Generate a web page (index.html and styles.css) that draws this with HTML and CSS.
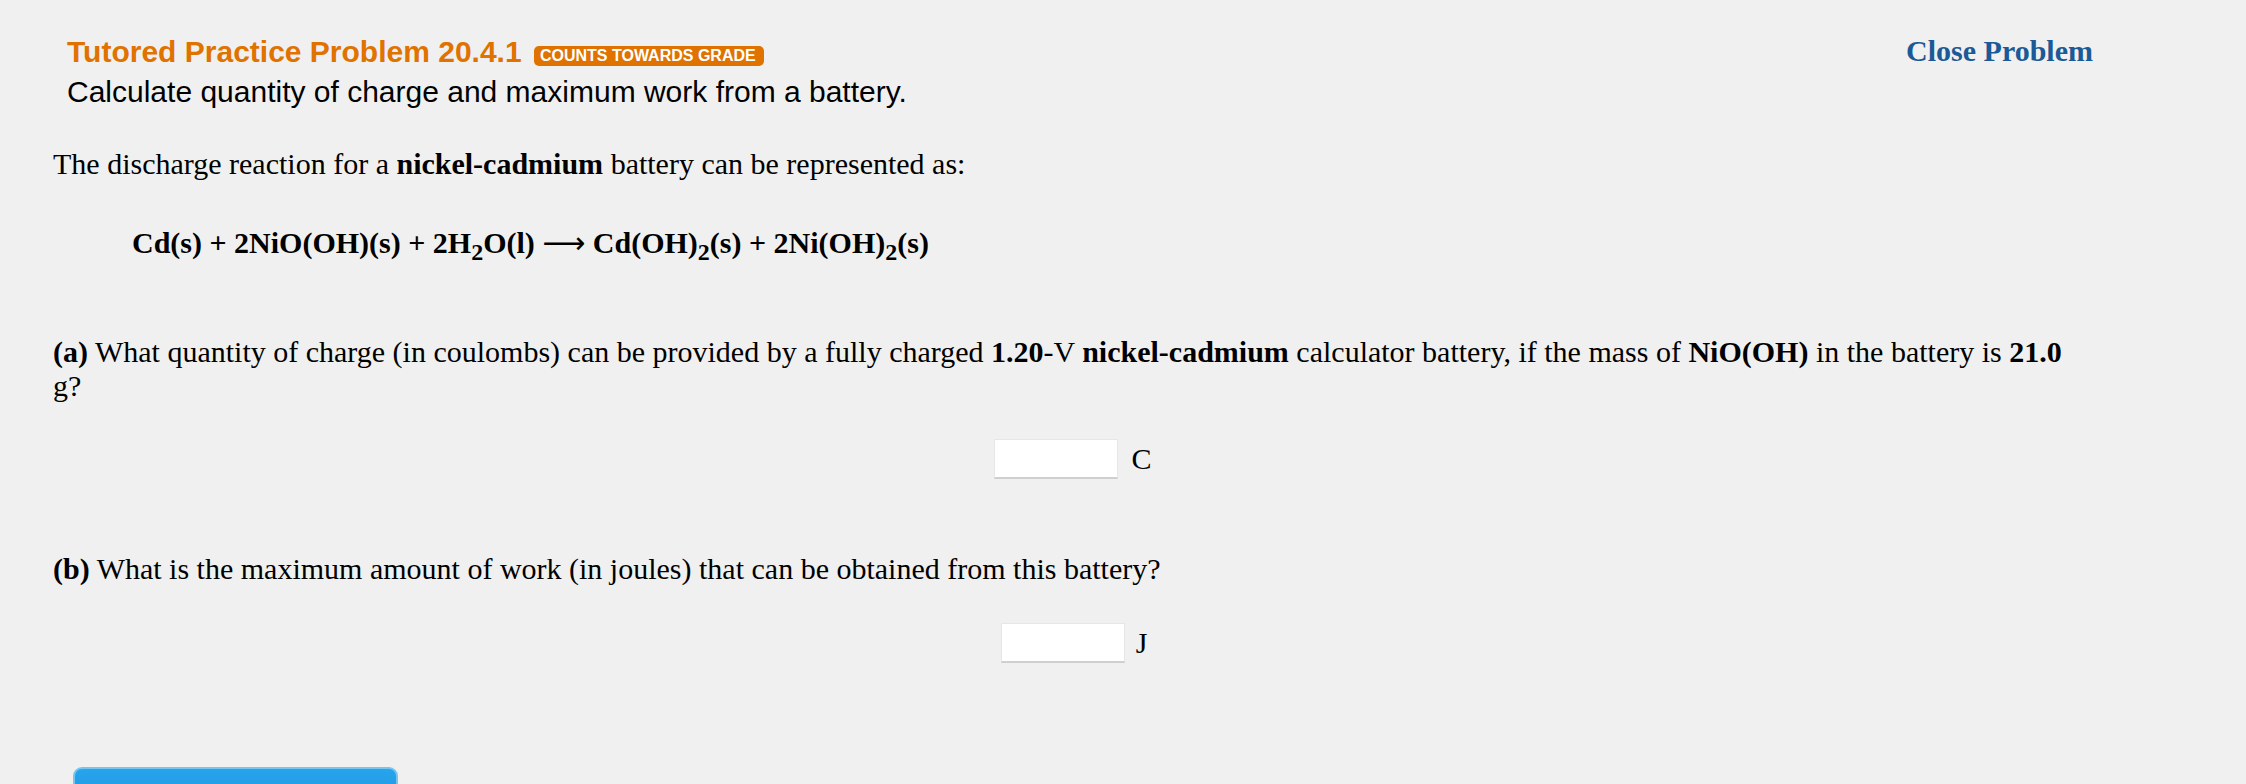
FILE: index.html
```html
<!DOCTYPE html>
<html lang="en">
<head>
<meta charset="utf-8">
<title>Tutored Practice Problem 20.4.1</title>
<link rel="stylesheet" href="styles.css">
</head>
<body>
<div class="page">
  <header class="head">
    <div class="head-main">
      <div class="title-line">
        <span class="title">Tutored Practice Problem 20.4.1</span>
        <span class="badge">COUNTS TOWARDS GRADE</span>
      </div>
      <div class="subtitle">Calculate quantity of charge and maximum work from a battery.</div>
    </div>
    <a class="close" href="#">Close Problem</a>
  </header>

  <p class="intro">The discharge reaction for a <b>nickel-cadmium</b> battery can be represented as:</p>

  <p class="equation">Cd(s) + 2NiO(OH)(s) + 2H<sub>2</sub>O(l) <span class="arrow">⟶</span> Cd(OH)<sub>2</sub>(s) + 2Ni(OH)<sub>2</sub>(s)</p>

  <p class="question q-a"><b>(a)</b> What quantity of charge (in coulombs) can be provided by a fully charged <b>1.20</b>-V <b>nickel-cadmium</b> calculator battery, if the mass of <b>NiO(OH)</b> in the battery is <b>21.0</b> g?</p>

  <div class="answer answer-a">
    <input class="field" type="text" aria-label="charge in coulombs">
    <span class="unit">C</span>
  </div>

  <p class="question q-b"><b>(b)</b> What is the maximum amount of work (in joules) that can be obtained from this battery?</p>

  <div class="answer answer-b">
    <input class="field" type="text" aria-label="work in joules">
    <span class="unit">J</span>
  </div>

  <div class="actions">
    <button class="submit" type="button"></button>
  </div>
</div>
</body>
</html>
```

FILE: styles.css
```css
html, body {
  margin: 0;
  padding: 0;
  overflow: hidden;
  background: #f0f0f0;
}

body {
  font-family: "Liberation Serif", "Times New Roman", serif;
  font-size: 30px;
  color: #000;
}

.page {
  width: 2040px;
  padding: 32px 0 0 53px;
}

.head {
  display: flex;
  justify-content: space-between;
  align-items: flex-start;
}

.head-main {
  padding-left: 14px;
}

.title-line {
  font-family: "Liberation Sans", Arial, Helvetica, sans-serif;
  line-height: 40px;
  white-space: nowrap;
}

.title {
  font-size: 30px;
  font-weight: bold;
  color: #e07200;
}

.badge {
  display: inline-block;
  margin-left: 4px;
  padding: 0 8px 0 6px;
  height: 20px;
  line-height: 20px;
  font-size: 16px;
  font-weight: bold;
  color: #fff;
  background: #e07200;
  border-radius: 5px;
  vertical-align: 1px;
}

.subtitle {
  font-family: "Liberation Sans", Arial, Helvetica, sans-serif;
  font-size: 30px;
  line-height: 40px;
  color: #000;
}

.close {
  font-family: "Liberation Serif", "Times New Roman", serif;
  font-size: 30px;
  font-weight: bold;
  line-height: 40px;
  color: #1b5a96;
  text-decoration: none;
  margin-top: -1px;
}

p {
  margin: 0;
  line-height: 34px;
}

.intro {
  margin-top: 35px;
}

.equation {
  margin-top: 45px;
  padding-left: 79px;
  font-weight: bold;
}

.equation sub {
  font-size: 0.8em;
  line-height: 0;
  vertical-align: -0.3em;
}

.arrow {
  font-family: "DejaVu Sans", sans-serif;
  font-weight: normal;
  font-size: 30px;
}

.q-a {
  margin-top: 75px;
}

.q-b {
  margin-top: 73px;
}

.answer {
  display: flex;
  justify-content: center;
  align-items: center;
  gap: 13px;
  height: 40px;
}

.answer-a {
  margin-top: 36px;
}

.answer-b {
  margin-top: 37px;
}

.field {
  box-sizing: border-box;
  width: 124px;
  height: 40px;
  margin: 0;
  padding: 0 6px;
  background: #fff;
  border: 1px solid #e6e6e6;
  border-bottom: 2px solid #cfcfcf;
  border-radius: 0;
  font-size: 20px;
}

.answer-b .field {
  position: relative;
  left: 2px;
}

.unit {
  line-height: 40px;
  font-size: 30px;
}

.actions {
  margin-top: 104px;
  padding-left: 20px;
}

.submit {
  display: block;
  width: 325px;
  height: 50px;
  padding: 0;
  border: 2px solid #74c6f1;
  border-radius: 9px;
  background: linear-gradient(#26a4ec, #1f93de);
}
```
